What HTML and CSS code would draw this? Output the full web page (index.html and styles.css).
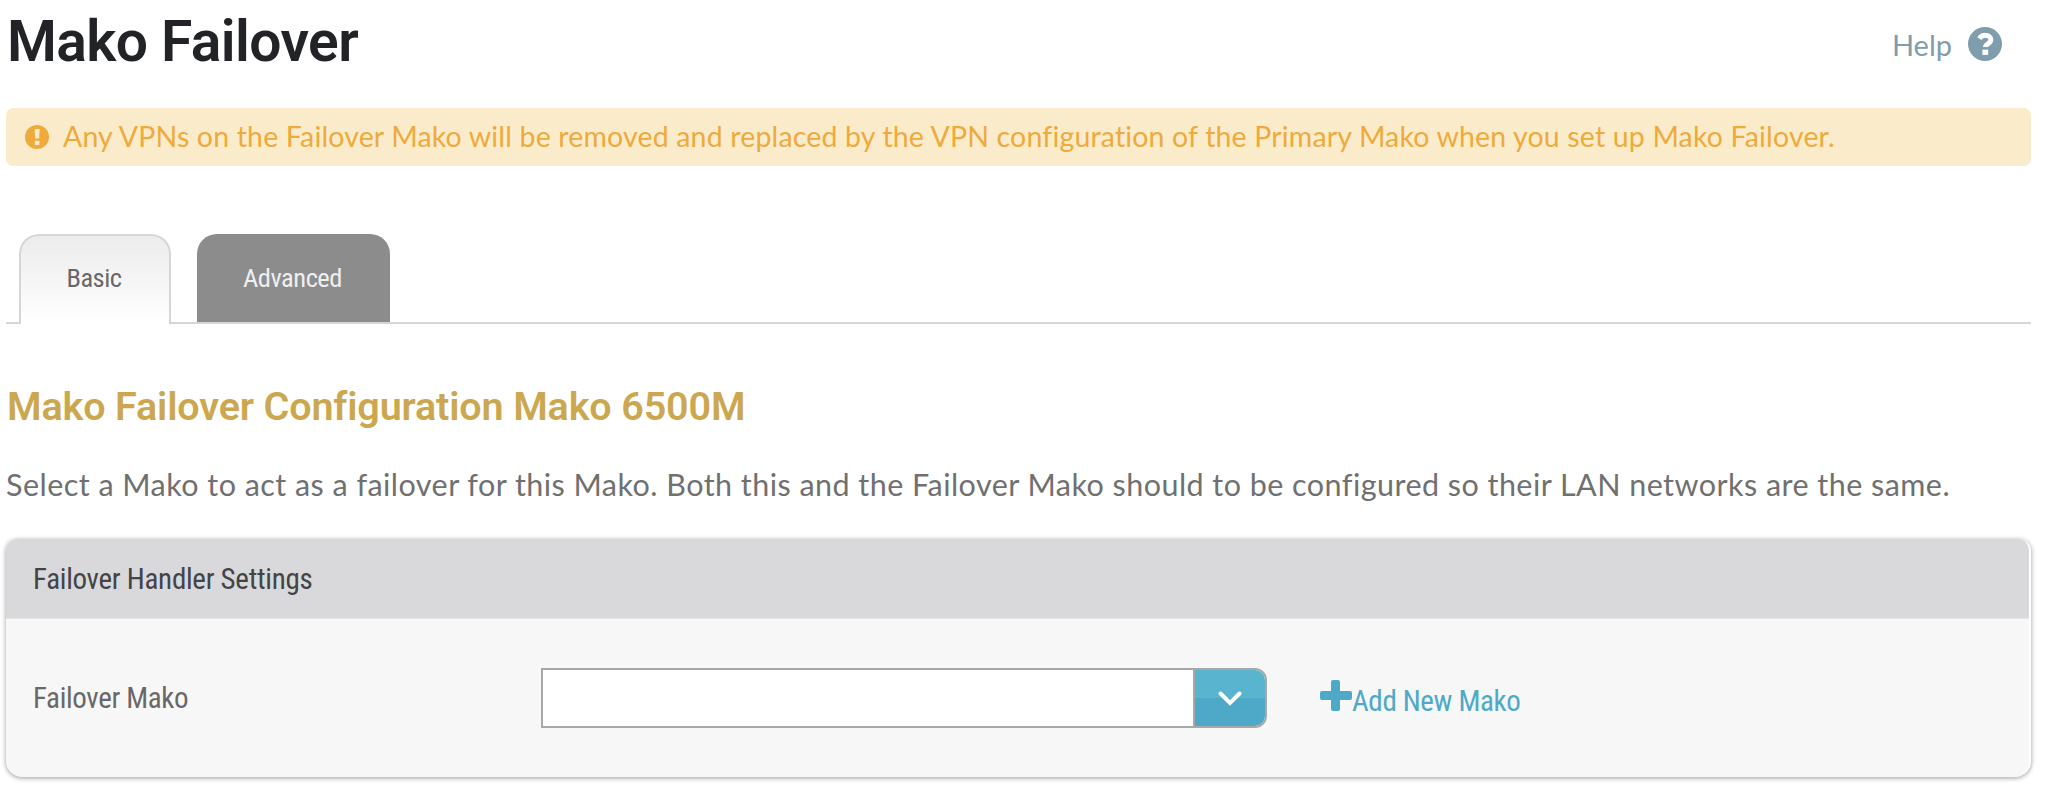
FILE: index.html
```html
<!DOCTYPE html>
<html lang="en">
<head>
<meta charset="utf-8">
<title>Mako Failover</title>
<link rel="stylesheet" href="styles.css">
</head>
<body>
<div class="header">
<h1>Mako Failover</h1>
<a class="help"><span>Help</span>
<svg width="34" height="34" viewBox="0 0 34 34"><circle cx="17" cy="17" r="17" fill="#7f9dac"/><path d="M11.4 11.6C13 9 14.8 8.3 17.2 8.3c3 0 5.6 1.8 5.6 4.5 0 4-5.3 3.8-5.3 7.2" fill="none" stroke="#fff" stroke-width="5"/><path d="M14.4 22.6h5.8v5.3h-5.8z" fill="#fff"/></svg>
</a>
</div>

<div class="alert">
<svg width="24" height="24" viewBox="0 0 24 24"><circle cx="12" cy="12" r="12" fill="#eeaa3b"/><path d="M9.6 4h5l-.5 9.6h-4zM9.8 15.7h4.6V20H9.8z" fill="#faeccb"/></svg>
<span>Any VPNs on the Failover Mako will be removed and replaced by the VPN configuration of the Primary Mako when you set up Mako Failover.</span>
</div>

<div class="tabs">
<div class="tab active">Basic</div>
<div class="tab">Advanced</div>
</div>

<h2>Mako Failover Configuration Mako 6500M</h2>
<p class="intro">Select a Mako to act as a failover for this Mako. Both this and the Failover Mako should to be configured so their LAN networks are the same.</p>

<div class="panel">
<div class="panel-title">Failover Handler Settings</div>
<div class="panel-row">
<label>Failover Mako</label>
<div class="select">
<div class="select-value"></div>
<div class="select-button">
<svg width="24" height="16" viewBox="0 0 24 16"><path d="M2.5 3.5 12 13l9.5-9.5" fill="none" stroke="#fff" stroke-width="4" stroke-linecap="round"/></svg>
</div>
</div>
<a class="add">
<svg width="32" height="32" viewBox="0 0 32 32"><path d="M13 0h5q2 0 2 2v9h10q2 0 2 2v5q0 2-2 2H20v9q0 2-2 2h-5q-2 0-2-2v-9H2q-2 0-2-2v-5q0-2 2-2h9V2q0-2 2-2z" fill="#4da9c7"/></svg>
<span>Add New Mako</span>
</a>
</div>
</div>
</body>
</html>
```

FILE: styles.css
```css
*{
box-sizing:border-box;
}
body{
margin:0;
height:785px;
padding:0 17px 0 6px;
background:#fff;
font-family:Lato, sans-serif;
white-space:nowrap;
overflow:hidden;
}
.header{
display:flex;
justify-content:space-between;
height:108px;
padding-right:29px;
}
h1{
margin:9px 0 0 1px;
font-family:Roboto, sans-serif;
font-size:57px;
line-height:66px;
font-weight:600;
letter-spacing:-0.6px;
color:#222327;
}
.help{
display:flex;
gap:16px;
height:34px;
margin-top:27px;
font-size:29px;
line-height:35px;
color:#7f9dac;
}
.alert{
display:flex;
align-items:center;
gap:14px;
height:58px;
padding-left:19px;
border-radius:7px;
background:#faeccb;
color:#eeaa3b;
font-size:28.5px;
letter-spacing:0.16px;
line-height:56px;
}
.alert span{
height:58px;
}
.tabs{
display:flex;
align-items:flex-start;
gap:26px;
height:90px;
margin-top:68px;
padding-left:13px;
border-bottom:2px solid #d6d6d6;
}
.tab{
width:193px;
height:88px;
padding-right:2px;
border-radius:20px 20px 0 0;
background:#8c8c8c;
color:#efefef;
font-family:"Roboto Condensed", Roboto, sans-serif;
font-stretch:75%;
font-size:26.5px;
font-weight:450;
letter-spacing:-0.5px;
line-height:88px;
text-align:center;
}
.tab.active{
width:152px;
height:90px;
border:2px solid #d6d6d6;
border-bottom:0;
background:linear-gradient(#ececec,#fff);
color:#686868;
line-height:84px;
}
h2{
margin:61px 0 0 1px;
font-family:Roboto, sans-serif;
font-size:39.5px;
line-height:44px;
font-weight:600;
letter-spacing:-0.14px;
color:#cba850;
}
.intro{
margin:35px 0 0;
font-size:30.5px;
letter-spacing:0.46px;
line-height:40px;
color:#707070;
}
.panel{
height:238px;
margin-top:35px;
border-right:2px solid #fff;
border-radius:12px 12px 16px 16px;
background:#f7f7f7;
box-shadow:0 1px 5px rgba(0,0,0,.4);
overflow:hidden;
font-family:"Roboto Condensed", Roboto, sans-serif;
font-stretch:75%;
font-size:29px;
font-weight:450;
letter-spacing:-0.35px;
}
.panel-title{
height:80px;
padding-left:27px;
border-bottom:1px solid #e5e5e5;
background:#d9d9db;
color:#444447;
letter-spacing:-0.28px;
line-height:80px;
}
.panel-row{
display:flex;
align-items:center;
height:158px;
padding-left:27px;
}
label{
width:508px;
color:#686868;
}
.select{
display:flex;
width:726px;
height:60px;
border:2px solid #a8a8a8;
border-radius:0 12px 12px 0;
background:#fff;
overflow:hidden;
}
.select-value{
flex:1;
}
.select-button{
display:flex;
align-items:center;
justify-content:center;
width:72px;
border-left:2px solid #a8a8a8;
background:linear-gradient(#59b5cf 50%,#4da9c7 50%);
}
.add{
display:flex;
height:38px;
margin-left:53px;
color:#4da9c7;
line-height:45px;
}
.add svg{
margin-top:1px;
}
```
